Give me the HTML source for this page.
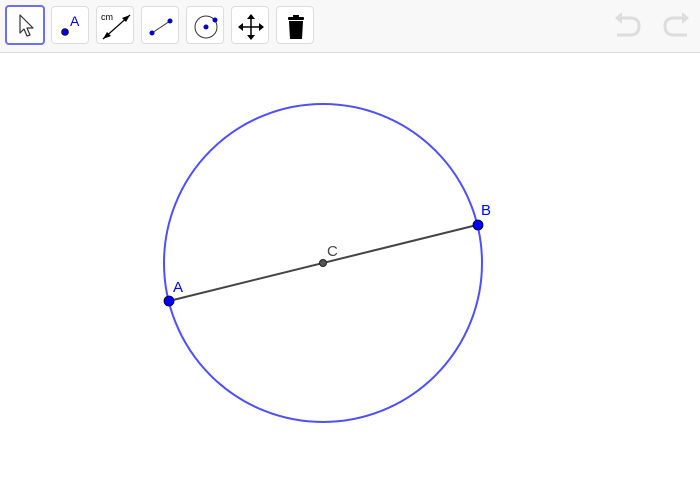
<!DOCTYPE html>
<html><head><meta charset="utf-8"><style>
html,body{margin:0;padding:0;width:700px;height:500px;overflow:hidden;background:#fff;font-family:"Liberation Sans",sans-serif}
#tb{position:absolute;left:0;top:0;width:700px;height:52px;background:#f8f8f8;border-bottom:1px solid #ddd}
.b{position:absolute;top:6px;width:38px;height:38px;background:#fff;border:1px solid #ddd;border-radius:4px;box-sizing:border-box}
.b.sel{border:2px solid #6b70f0}
.b svg{position:absolute;left:0;top:0}
</style></head><body>
<div id="tb">
<div class="b sel" style="left:5px;width:40px;height:40px;top:5px"><svg width="36" height="36" viewBox="0 0 36 36"><path d="M13 8 L13 26 L17 22 L20 29 L23 28 L20 21 L26 21 Z" fill="#fff" stroke="#333" stroke-width="1.2" stroke-linejoin="round"/></svg></div>
<div class="b" style="left:51px"><svg width="38" height="38"><circle cx="13" cy="25" r="3.5" fill="#00c" stroke="#000" stroke-width=".6"/><text x="18" y="19" font-size="14" fill="#00f" font-family="Liberation Sans">A</text></svg></div>
<div class="b" style="left:96px"><svg width="38" height="38"><text x="4" y="13" font-size="9" fill="#000" font-family="Liberation Sans">cm</text><line x1="6" y1="32" x2="33" y2="8" stroke="#000" stroke-width="1.2"/><path d="M33 8 L25 11 L29 15 Z M6 32 L14 29 L10 25 Z" fill="#000"/></svg></div>
<div class="b" style="left:141px"><svg width="38" height="38"><line x1="10" y1="26" x2="28" y2="14" stroke="#333" stroke-width="1"/><circle cx="10" cy="26" r="2.5" fill="#00c"/><circle cx="28" cy="14" r="2.5" fill="#00c"/></svg></div>
<div class="b" style="left:186px"><svg width="38" height="38"><circle cx="19" cy="20" r="11" fill="none" stroke="#333" stroke-width="1"/><circle cx="19" cy="20" r="2.5" fill="#00c"/><circle cx="28" cy="13" r="2.5" fill="#00c"/></svg></div>
<div class="b" style="left:231px"><svg width="38" height="38"><path d="M19 8 V32 M7 20 H31" stroke="#000" stroke-width="1.5"/><path d="M19 7 L15 12 H23Z M19 33 L15 28 H23Z M6 20 L11 16 V24Z M32 20 L27 16 V24Z" fill="#000"/></svg></div>
<div class="b" style="left:276px"><svg width="38" height="38"><rect x="11" y="10" width="16" height="3" rx="1" fill="#000"/><rect x="16" y="8" width="6" height="3" fill="#000"/><path d="M12 14 H26 L25 32 H13Z" fill="#000"/></svg></div>
<svg style="position:absolute;left:612px;top:10px" width="80" height="30"><path d="M6 8 H18 Q27 8 27 16 Q27 25 18 25 H5" fill="none" stroke="#ddd" stroke-width="3"/><path d="M3 8 L10 2 V14Z" fill="#ddd"/><path d="M74 8 H62 Q53 8 53 16 Q53 25 62 25 H75" fill="none" stroke="#ddd" stroke-width="3"/><path d="M77 8 L70 2 V14Z" fill="#ddd"/></svg>
</div>
<svg style="position:absolute;left:0;top:0" width="700" height="500">
<circle cx="323" cy="263" r="159" fill="none" stroke="#4f4fff" stroke-width="2"/>
<line x1="169" y1="301" x2="477" y2="225" stroke="#444" stroke-width="2"/>
<circle cx="323" cy="263" r="3.5" fill="#555" stroke="#222" stroke-width="1"/>
<circle cx="169" cy="301" r="5" fill="#00f" stroke="#000" stroke-width=".8"/>
<circle cx="478" cy="225" r="5" fill="#00f" stroke="#000" stroke-width=".8"/>
<text x="173" y="292" font-size="15" fill="#00f" font-family="Liberation Sans">A</text>
<text x="481" y="215" font-size="15" fill="#00f" font-family="Liberation Sans">B</text>
<text x="327" y="256" font-size="15" fill="#444" font-family="Liberation Sans">C</text>
</svg>
</body></html>
